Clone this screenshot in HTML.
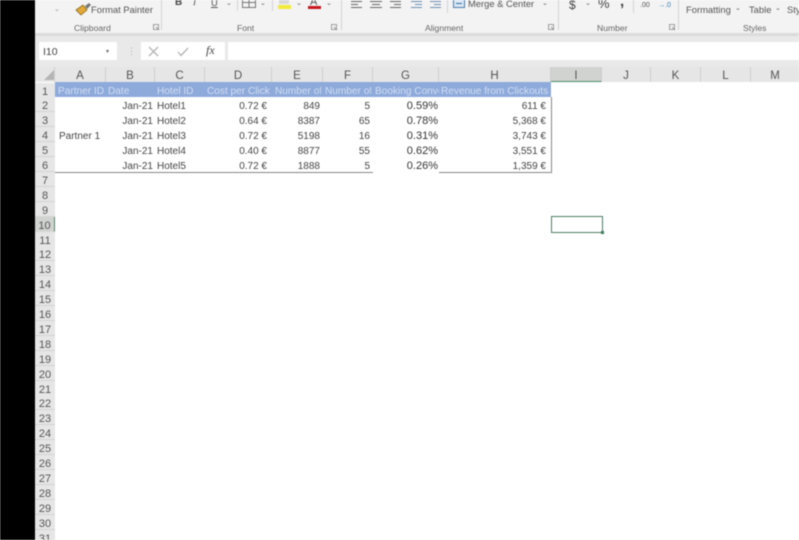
<!DOCTYPE html>
<html><head><meta charset="utf-8">
<style>
html,body{margin:0;padding:0;width:799px;height:540px;overflow:hidden;background:#fff}
#p{position:relative;width:799px;height:540px;overflow:hidden;font-family:"Liberation Sans",sans-serif;filter:blur(.45px)}
#p div{position:absolute;white-space:nowrap}
.rb{font-size:8.6px;color:#666;top:22px;line-height:12px}
.t{font-size:9.4px;color:#555;line-height:12px}
.v{position:absolute;width:1px;background:#d4d4d4}
.ch{top:67px;height:15px;line-height:18px;background:#e6e6e6;border-right:1px solid #cfcfcf;box-sizing:border-box;text-align:center;font-size:11.5px;color:#555}
.rh{left:35px;width:20px;height:15px;line-height:18px;background:#e6e6e6;border-bottom:1px solid #d4d4d4;box-sizing:border-box;text-align:center;font-size:11px;color:#555}
.hd{top:82px;height:15px;line-height:19px;font-size:10.1px;color:#d3dff2;overflow:hidden}
.c{height:15px;line-height:19px;font-size:10px;color:#444;text-align:right}
.g{height:15px;line-height:18px;font-size:11px;color:#333;text-align:right;left:373px;width:65px}
</style></head><body><div id="p">
<div style="left:0;top:0;width:35px;height:540px;background:#000"></div>
<div style="left:35px;top:0;width:764px;height:34px;background:#f3f3f3"></div>
<div style="left:35px;top:33px;width:764px;height:3px;background:#dcdcdc"></div>
<div style="left:35px;top:36px;width:764px;height:31px;background:#e9e9e9"></div>

<div class="v" style="left:161px;top:0;height:30px"></div>
<div class="v" style="left:341px;top:0;height:30px"></div>
<div class="v" style="left:558px;top:0;height:30px"></div>
<div class="v" style="left:678px;top:0;height:30px"></div>
<div class="v" style="left:237px;top:0;height:11px"></div>
<div class="v" style="left:272px;top:0;height:11px"></div>
<div class="v" style="left:447px;top:0;height:13px"></div>
<div class="v" style="left:633px;top:0;height:13px"></div>

<div class="t" style="left:54px;top:4px;font-size:7px;color:#999">⌄</div>
<svg style="position:absolute;left:75px;top:2px" width="17" height="14" viewBox="0 0 17 14"><path d="M1 8 L8 3 L12 8 L6 13 Z" fill="#e0a93a" stroke="#8a6a20" stroke-width=".8"/><path d="M10 4 L14 1 L16 3 L12 7" fill="#777"/></svg>
<div class="t" style="left:91px;top:4px">Format Painter</div>
<div class="rb" style="left:74px">Clipboard</div>

<div class="t" style="left:175px;top:-3px;font-weight:bold;font-size:10px;color:#444">B</div>
<div class="t" style="left:193px;top:-3px;font-style:italic;font-family:'Liberation Serif',serif;color:#555">I</div>
<div class="t" style="left:211px;top:-3px;text-decoration:underline;color:#555">U</div>
<div class="t" style="left:226px;top:-2px;font-size:7px;color:#666">⌄</div>
<svg style="position:absolute;left:242px;top:0" width="14" height="9"><path d="M.5 0V7.500H13.500V0M7 0V7.500M.5 2.500H13.500" fill="none" stroke="#777"/></svg>
<div class="t" style="left:260px;top:-2px;font-size:7px;color:#666">⌄</div>
<div style="left:279px;top:0;width:10px;height:4px;background:#d8d8d8"></div>
<div style="left:278px;top:5px;width:13px;height:4px;background:#f2ea3a"></div>
<div class="t" style="left:296px;top:-2px;font-size:7px;color:#666">⌄</div>
<div class="t" style="left:310px;top:-4px;font-size:11px;color:#555">A</div>
<div style="left:308px;top:6px;width:13px;height:3px;background:#c8171d"></div>
<div class="t" style="left:326px;top:-2px;font-size:7px;color:#666">⌄</div>
<div class="rb" style="left:237px">Font</div>

<svg style="position:absolute;left:350px;top:0" width="122" height="10"><path d="M1 1.500H12M1 4.500H8M1 7.500H12M20 1.500H32M22 4.500H30M20 7.500H32M40 1.500H51M44 4.500H51M40 7.500H51" stroke="#666" fill="none"/><path d="M61 1.500H72M65 4.500H72M61 7.500H72M80 1.500H91M84 4.500H91M80 7.500H91" stroke="#6b8fb0" fill="none"/></svg>
<svg style="position:absolute;left:453px;top:-1px" width="13" height="10"><rect x=".5" y=".5" width="11" height="8" fill="#dbe7f3" stroke="#4f7fa8"/><path d="M3 4.500H9" stroke="#2f6f9f"/></svg>
<div class="t" style="left:468px;top:-2px">Merge &amp; Center</div>
<div class="t" style="left:542px;top:-2px;font-size:7px;color:#666">⌄</div>
<div class="rb" style="left:425px">Alignment</div>

<div class="t" style="left:569px;top:-1px;font-size:12px;color:#444">$</div>
<div class="t" style="left:585px;top:-2px;font-size:7px;color:#666">⌄</div>
<div class="t" style="left:598px;top:-2px;font-size:13px;color:#444">%</div>
<div class="t" style="left:620px;top:-4px;font-size:15px;font-weight:bold;color:#444">,</div>
<div class="t" style="left:640px;top:0;font-size:7px;color:#555">.00</div>
<div class="t" style="left:658px;top:0;font-size:7px;color:#2f7fb0">→.0</div>
<div class="rb" style="left:597px">Number</div>

<div class="t" style="left:686px;top:4px">Formatting</div>
<div class="t" style="left:735px;top:3px;font-size:7px;color:#666">⌄</div>
<div class="t" style="left:749px;top:4px">Table</div>
<div class="t" style="left:775px;top:3px;font-size:7px;color:#666">⌄</div>
<div class="t" style="left:787px;top:4px">Sty</div>
<div class="rb" style="left:743px">Styles</div>

<svg style="position:absolute;left:0;top:0" width="799" height="32" fill="none" stroke="#888" stroke-width=".8"><path d="M153.500 24.500h5v5h-5zM156 27l3 3M331.500 24.500h5v5h-5zM334 27l3 3M548.500 24.500h5v5h-5zM551 27l3 3M669.500 24.500h5v5h-5zM672 27l3 3"/></svg>

<div style="left:39px;top:42px;width:78px;height:18px;background:#fff"></div>
<div class="t" style="left:43px;top:46px;font-size:10.500px;color:#444">I10</div>
<div class="t" style="left:106px;top:46px;font-size:6px;color:#666">▾</div>
<div class="t" style="left:127px;top:45px;font-size:9px;color:#aaa">⋮</div>
<div style="left:141px;top:42px;width:84px;height:18px;background:#fff"></div>
<svg style="position:absolute;left:148px;top:46px" width="70" height="11" fill="none" stroke-width="1.300"><path d="M1 1L10 10M10 1L1 10" stroke="#b5b5b5"/><path d="M30 6L33 9.500L40 2" stroke="#b5b5b5"/></svg>
<div class="t" style="left:206px;top:44px;font-family:'Liberation Serif',serif;font-style:italic;font-size:12px;color:#444">fx</div>
<div style="left:228px;top:42px;width:571px;height:18px;background:#fff"></div>

<div style="left:35px;top:67px;width:20px;height:15px;background:#e6e6e6;border-right:1px solid #cfcfcf;box-sizing:border-box"></div>
<svg style="position:absolute;left:44px;top:70px" width="11" height="11"><path d="M10 0V10H0Z" fill="#b5b5b5"/></svg>
<div class="ch" style="left:55px;width:51px">A</div>
<div class="ch" style="left:106px;width:49px">B</div>
<div class="ch" style="left:155px;width:50px">C</div>
<div class="ch" style="left:205px;width:67px">D</div>
<div class="ch" style="left:272px;width:51px">E</div>
<div class="ch" style="left:323px;width:50px">F</div>
<div class="ch" style="left:373px;width:66px">G</div>
<div class="ch" style="left:439px;width:112px">H</div>
<div class="ch" style="left:551px;width:51px;background:#d0d3d0;border-bottom:1px solid #4f8a6a">I</div>
<div class="ch" style="left:602px;width:49px">J</div>
<div class="ch" style="left:651px;width:50px">K</div>
<div class="ch" style="left:701px;width:50px">L</div>
<div class="ch" style="left:751px;width:48px;border-right:0">M</div>

<div class="rh" style="top:82.5px">1</div><div class="rh" style="top:97.4px">2</div><div class="rh" style="top:112.3px">3</div><div class="rh" style="top:127.2px">4</div><div class="rh" style="top:142.1px">5</div><div class="rh" style="top:157px">6</div><div class="rh" style="top:171.9px">7</div><div class="rh" style="top:186.8px">8</div><div class="rh" style="top:201.7px">9</div>
<div class="rh" style="top:216.6px;background:#d0d3d0;border-right:1px solid #4f8a6a">10</div>
<div class="rh" style="top:231.5px">11</div><div class="rh" style="top:246.4px">12</div><div class="rh" style="top:261.3px">13</div><div class="rh" style="top:276.2px">14</div><div class="rh" style="top:291.1px">15</div><div class="rh" style="top:306px">16</div><div class="rh" style="top:320.9px">17</div><div class="rh" style="top:335.8px">18</div><div class="rh" style="top:350.7px">19</div><div class="rh" style="top:365.6px">20</div><div class="rh" style="top:380.5px">21</div><div class="rh" style="top:395.4px">22</div><div class="rh" style="top:410.3px">23</div><div class="rh" style="top:425.2px">24</div><div class="rh" style="top:440.1px">25</div><div class="rh" style="top:455px">26</div><div class="rh" style="top:469.9px">27</div><div class="rh" style="top:484.8px">28</div><div class="rh" style="top:499.7px">29</div><div class="rh" style="top:514.6px">30</div><div class="rh" style="top:529.5px">31</div>

<div style="left:55px;top:82px;width:496px;height:15px;background:#8eaadb"></div>
<div class="hd" style="left:58px;width:48px">Partner ID</div>
<div class="hd" style="left:108px;width:47px">Date</div>
<div class="hd" style="left:157px;width:48px">Hotel ID</div>
<div class="hd" style="left:207px;width:65px">Cost per Click</div>
<div class="hd" style="left:275px;width:46px">Number of</div>
<div class="hd" style="left:325px;width:46px">Number of</div>
<div class="hd" style="left:375px;width:64px">Booking Conversion</div>
<div class="hd" style="left:441px;width:110px">Revenue from Clickouts</div>

<div class="c" style="left:59px;top:127px;text-align:left">Partner 1</div>
<div class="c" style="left:106px;top:97px;width:47px">Jan-21</div><div class="c" style="left:157px;top:97px">Hotel1</div><div class="c" style="left:205px;top:97px;width:62px">0.72 €</div><div class="c" style="left:272px;top:97px;width:48px">849</div><div class="c" style="left:323px;top:97px;width:47px">5</div><div class="g" style="top:97px">0.59%</div><div class="c" style="left:439px;top:97px;width:107px">611 €</div>
<div class="c" style="left:106px;top:112px;width:47px">Jan-21</div><div class="c" style="left:157px;top:112px">Hotel2</div><div class="c" style="left:205px;top:112px;width:62px">0.64 €</div><div class="c" style="left:272px;top:112px;width:48px">8387</div><div class="c" style="left:323px;top:112px;width:47px">65</div><div class="g" style="top:112px">0.78%</div><div class="c" style="left:439px;top:112px;width:107px">5,368 €</div>
<div class="c" style="left:106px;top:127px;width:47px">Jan-21</div><div class="c" style="left:157px;top:127px">Hotel3</div><div class="c" style="left:205px;top:127px;width:62px">0.72 €</div><div class="c" style="left:272px;top:127px;width:48px">5198</div><div class="c" style="left:323px;top:127px;width:47px">16</div><div class="g" style="top:127px">0.31%</div><div class="c" style="left:439px;top:127px;width:107px">3,743 €</div>
<div class="c" style="left:106px;top:142px;width:47px">Jan-21</div><div class="c" style="left:157px;top:142px">Hotel4</div><div class="c" style="left:205px;top:142px;width:62px">0.40 €</div><div class="c" style="left:272px;top:142px;width:48px">8877</div><div class="c" style="left:323px;top:142px;width:47px">55</div><div class="g" style="top:142px">0.62%</div><div class="c" style="left:439px;top:142px;width:107px">3,551 €</div>
<div class="c" style="left:106px;top:157px;width:47px">Jan-21</div><div class="c" style="left:157px;top:157px">Hotel5</div><div class="c" style="left:205px;top:157px;width:62px">0.72 €</div><div class="c" style="left:272px;top:157px;width:48px">1888</div><div class="c" style="left:323px;top:157px;width:47px">5</div><div class="g" style="top:157px">0.26%</div><div class="c" style="left:439px;top:157px;width:107px">1,359 €</div>

<div style="left:55px;top:172px;width:318px;height:1px;background:#888"></div>
<div style="left:439px;top:172px;width:113px;height:1px;background:#888"></div>
<div style="left:551px;top:97px;width:1px;height:76px;background:#888"></div>

<div style="left:551px;top:216px;width:52px;height:17px;box-sizing:border-box;border:1px solid #4a7f64"></div>
<div style="left:601px;top:231px;width:3px;height:3px;background:#3f7a5c"></div>
</div></body></html>
